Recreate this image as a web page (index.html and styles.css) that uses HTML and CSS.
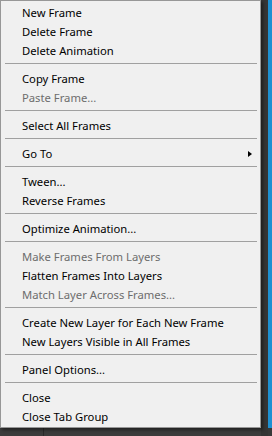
FILE: index.html
```html
<!DOCTYPE html>
<html>
<head>
<meta charset="utf-8">
<link rel="stylesheet" href="styles.css">
</head>
<body>
<div class="screen">
  <div class="left">
    <div class="menu">
      <div class="item">New Frame</div>
      <div class="item">Delete Frame</div>
      <div class="item">Delete Animation</div>
      <div class="sep"></div>
      <div class="item">Copy Frame</div>
      <div class="item disabled">Paste Frame...</div>
      <div class="sep"></div>
      <div class="item">Select All Frames</div>
      <div class="sep"></div>
      <div class="item sub">Go To<span class="arrow"></span></div>
      <div class="sep"></div>
      <div class="item">Tween...</div>
      <div class="item">Reverse Frames</div>
      <div class="sep"></div>
      <div class="item">Optimize Animation...</div>
      <div class="sep"></div>
      <div class="item disabled">Make Frames From Layers</div>
      <div class="item">Flatten Frames Into Layers</div>
      <div class="item disabled">Match Layer Across Frames...</div>
      <div class="sep"></div>
      <div class="item">Create New Layer for Each New Frame</div>
      <div class="item">New Layers Visible in All Frames</div>
      <div class="sep"></div>
      <div class="item">Panel Options...</div>
      <div class="sep"></div>
      <div class="item">Close</div>
      <div class="item">Close Tab Group</div>
    </div>
    <div class="below">
      <div class="below-a"></div>
      <div class="below-b"></div>
    </div>
  </div>
  <div class="gap"></div>
  <div class="blue"></div>
</div>
</body>
</html>
```

FILE: styles.css
```css
html, body {
  margin: 0;
  padding: 0;
}
body {
  background: #383838;
  width: 272px;
  height: 436px;
  overflow: hidden;
  font-family: "Noto Sans", "Open Sans", sans-serif;
  font-size: 11.25px;
}
.screen {
  display: flex;
  width: 272px;
  height: 436px;
}
.left {
  width: 261px;
  display: flex;
  flex-direction: column;
}
.menu {
  position: relative;
  z-index: 1;
  background: #f0f0f0;
  border: 1px solid #979797;
  padding: 2px 0 1px 0;
  box-shadow: 2px 2px 3px rgba(0, 0, 0, 0.45);
}
.item {
  height: 19px;
  line-height: 19px;
  padding-left: 21px;
  color: #000;
  white-space: nowrap;
  display: flex;
  align-items: center;
}
.item.disabled {
  color: #6d6d6d;
}
.item.sub {
  justify-content: space-between;
  padding-right: 8px;
}
.arrow {
  width: 0;
  height: 0;
  border-top: 3.5px solid transparent;
  border-bottom: 3.5px solid transparent;
  border-left: 4px solid #000;
}
.sep {
  height: 1px;
  margin: 3px 3px 5px 4px;
  background: #a0a0a0;
}
.below {
  flex: 1;
  display: flex;
  background: #3c3c3c;
}
.below-a {
  width: 43px;
  border-right: 1px solid #2a2a2a;
}
.below-b {
  flex: 1;
}
.gap {
  width: 7px;
  background: #353535;
}
.blue {
  width: 4px;
  height: 428px;
  background: #1e90d2;
}
```
